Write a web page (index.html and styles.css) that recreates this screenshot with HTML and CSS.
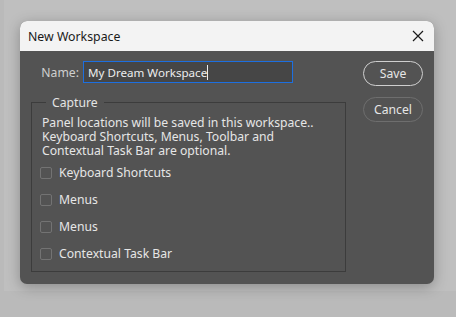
FILE: index.html
```html
<!DOCTYPE html>
<html>
  <head>
    <title>New Workspace</title>
    <link rel="stylesheet" href="styles.css">
  </head>
  <body>
    <div class="stage">
      <div class="dialog">
        <div class="titlebar">
          <span class="title">New Workspace</span>
          <svg class="close" viewBox="0 0 12 12" width="12" height="12">
            <path d="M1 1 L11 11 M11 1 L1 11" stroke="#1a1a1a" stroke-width="1.2" fill="none" />
          </svg>
        </div>
        <div class="content">
          <div class="main">
            <div class="name-row">
              <label class="name-label">Name:</label>
              <div class="name-input">My Dream Workspace<span class="caret"></span></div>
            </div>
            <fieldset class="capture">
              <legend>Capture</legend>
              <p class="note">
                Panel locations will be saved in this workspace..<br>
                Keyboard Shortcuts, Menus, Toolbar and<br>
                Contextual Task Bar are optional.
              </p>
              <div class="check"><span class="box"></span>Keyboard Shortcuts</div>
              <div class="check"><span class="box"></span>Menus</div>
              <div class="check"><span class="box"></span>Menus</div>
              <div class="check"><span class="box"></span>Contextual Task Bar</div>
            </fieldset>
          </div>
          <div class="buttons">
            <div class="btn primary">Save</div>
            <div class="btn">Cancel</div>
          </div>
        </div>
      </div>
    </div>
  </body>
</html>
```

FILE: styles.css
```css
body {
  margin: 0;
  width: 456px;
  height: 317px;
  background: #bababa;
  overflow: hidden;
  font-family: "Noto Sans", sans-serif;
}

.stage {
  margin-left: 4px;
  height: 291px;
  padding: 21px 0 0 16px;
  box-sizing: border-box;
  background: #bfbfbf;
}

.dialog {
  width: 414px;
  height: 263px;
  border-radius: 7px;
  overflow: hidden;
  background: #535353;
  box-shadow: 0 3px 14px rgba(0, 0, 0, 0.28);
  display: flex;
  flex-direction: column;
}

.titlebar {
  height: 30px;
  background: #f3f3f3;
  display: flex;
  align-items: center;
  justify-content: space-between;
  padding: 0 10px 0 8px;
}

.title {
  font-size: 12.3px;
  color: #1a1a1a;
}

.close {
  display: block;
}

.content {
  flex: 1;
  display: flex;
  padding: 10px 11px 12px 11px;
}

.main {
  width: 315px;
  display: flex;
  flex-direction: column;
}

.name-row {
  display: flex;
  align-items: center;
  height: 22px;
  margin-bottom: 11px;
}

.name-label {
  width: 48px;
  padding-right: 4px;
  text-align: right;
  font-size: 12.2px;
  color: #cfcfcf;
}

.name-input {
  width: 210px;
  height: 22px;
  box-sizing: border-box;
  border: 1px solid #1d6fe0;
  background: #464646;
  color: #ececec;
  font-size: 11.6px;
  padding: 0 4px;
  display: flex;
  align-items: center;
}

.caret {
  display: inline-block;
  width: 1px;
  height: 15px;
  background: #ececec;
}

.capture {
  flex: 1;
  margin: 0;
  padding: 5px 10px 0 10px;
  border: 1px solid #3c3c3c;
  min-width: 0;
}

.capture legend {
  margin-left: 4px;
  padding: 0 6px;
  font-size: 12.2px;
  color: #e4e4e4;
}

.note {
  margin: 0 0 1px;
  font-size: 12.2px;
  line-height: 14px;
  color: #e6e6e6;
}

.check {
  display: flex;
  align-items: center;
  height: 27px;
  font-size: 12.2px;
  color: #e6e6e6;
}

.box {
  width: 12px;
  height: 12px;
  box-sizing: border-box;
  border: 1px solid #737373;
  border-radius: 2px;
  margin-left: -2px;
  margin-right: 7px;
}

.buttons {
  margin-left: 17px;
  display: flex;
  flex-direction: column;
  gap: 11px;
}

.btn {
  width: 60px;
  height: 25px;
  box-sizing: border-box;
  border: 1.5px solid #6e6e6e;
  border-radius: 13px;
  display: flex;
  align-items: center;
  justify-content: center;
  font-size: 12.2px;
  color: #e6e6e6;
}

.btn.primary {
  border-color: #cfcfcf;
}
```
